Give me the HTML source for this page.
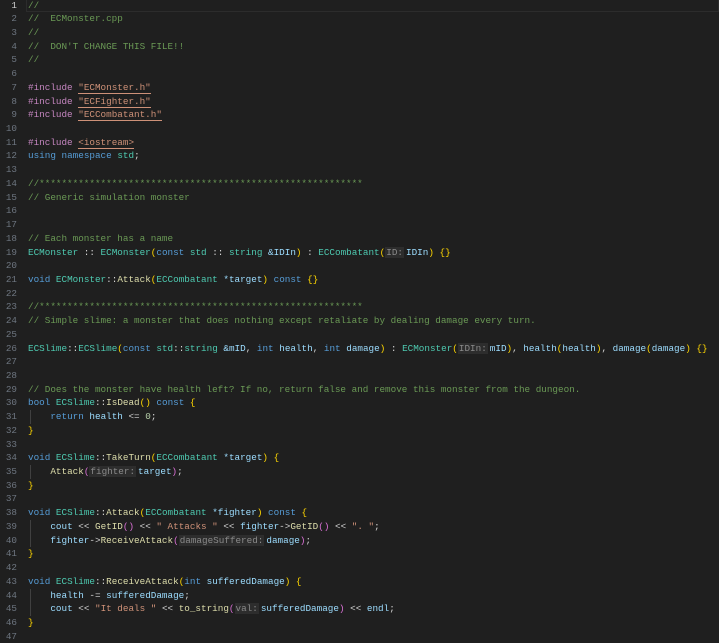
<!DOCTYPE html>
<html><head><meta charset="utf-8"><style>
html,body{margin:0;padding:0;background:#1f1f1f;width:719px;height:643px;overflow:hidden}
#ed{position:relative;font-family:"Liberation Mono",monospace;font-size:9.3px;color:#d4d4d4}
.l{position:absolute;left:0;height:13.72px;line-height:13.72px;white-space:pre;width:719px}
.n{position:absolute;left:0;width:17px;text-align:right;color:#6e7681}
.x{position:absolute;left:28px}
.cur{position:absolute;left:26px;right:0;border:1px solid #2c2c2c;box-sizing:border-box;height:13.72px}
.c{color:#6a9955}.k{color:#569cd6}.p{color:#c586c0}.s{color:#ce9178}.t{color:#4ec9b0}.f{color:#dcdcaa}.v{color:#9cdcfe}
.b1{color:#ffd700}.b2{color:#da70d6}.u{border-bottom:1px solid #ce9178}
.h{background:#2d2d2d;color:#8a8a8a;margin-right:2px;padding:0 1px}
.g{position:absolute;left:30px;width:1px;background:#404040}
</style></head><body><div id="ed">
<div class="l" style="top:-1.5px"><div class="cur"></div><span class="n" style="color:#ccc">1</span><span class="x c">//</span></div>
<div class="l" style="top:12.2px"><span class="n">2</span><span class="x c">//  ECMonster.cpp</span></div>
<div class="l" style="top:25.9px"><span class="n">3</span><span class="x c">//</span></div>
<div class="l" style="top:39.7px"><span class="n">4</span><span class="x c">//  DON'T CHANGE THIS FILE!!</span></div>
<div class="l" style="top:53.4px"><span class="n">5</span><span class="x c">//</span></div>
<div class="l" style="top:67.1px"><span class="n">6</span></div>
<div class="l" style="top:80.8px"><span class="n">7</span><span class="x"><span class="p">#include</span> <span class="s u">"ECMonster.h"</span></span></div>
<div class="l" style="top:94.5px"><span class="n">8</span><span class="x"><span class="p">#include</span> <span class="s u">"ECFighter.h"</span></span></div>
<div class="l" style="top:108.3px"><span class="n">9</span><span class="x"><span class="p">#include</span> <span class="s u">"ECCombatant.h"</span></span></div>
<div class="l" style="top:122px"><span class="n">10</span></div>
<div class="l" style="top:135.7px"><span class="n">11</span><span class="x"><span class="p">#include</span> <span class="s u">&lt;iostream&gt;</span></span></div>
<div class="l" style="top:149.4px"><span class="n">12</span><span class="x"><span class="k">using</span> <span class="k">namespace</span> <span class="t">std</span>;</span></div>
<div class="l" style="top:163.1px"><span class="n">13</span></div>
<div class="l" style="top:176.9px"><span class="n">14</span><span class="x c">//**********************************************************</span></div>
<div class="l" style="top:190.6px"><span class="n">15</span><span class="x c">// Generic simulation monster</span></div>
<div class="l" style="top:204.3px"><span class="n">16</span></div>
<div class="l" style="top:218px"><span class="n">17</span></div>
<div class="l" style="top:231.7px"><span class="n">18</span><span class="x c">// Each monster has a name</span></div>
<div class="l" style="top:245.5px"><span class="n">19</span><span class="x"><span class="t">ECMonster</span> :: <span class="t">ECMonster</span><span class="b1">(</span><span class="k">const</span> <span class="t">std</span> :: <span class="t">string</span> <span class="v">&amp;IDIn</span><span class="b1">)</span> : <span class="t">ECCombatant</span><span class="b1">(</span><span class="h">ID:</span><span class="v">IDIn</span><span class="b1">)</span> <span class="b1">{}</span></span></div>
<div class="l" style="top:259.2px"><span class="n">20</span></div>
<div class="l" style="top:272.9px"><span class="n">21</span><span class="x"><span class="k">void</span> <span class="t">ECMonster</span>::<span class="f">Attack</span><span class="b1">(</span><span class="t">ECCombatant</span> <span class="v">*target</span><span class="b1">)</span> <span class="k">const</span> <span class="b1">{}</span></span></div>
<div class="l" style="top:286.6px"><span class="n">22</span></div>
<div class="l" style="top:300.3px"><span class="n">23</span><span class="x c">//**********************************************************</span></div>
<div class="l" style="top:314.1px"><span class="n">24</span><span class="x c">// Simple slime: a monster that does nothing except retaliate by dealing damage every turn.</span></div>
<div class="l" style="top:327.8px"><span class="n">25</span></div>
<div class="l" style="top:341.5px"><span class="n">26</span><span class="x"><span class="t">ECSlime</span>::<span class="t">ECSlime</span><span class="b1">(</span><span class="k">const</span> <span class="t">std</span>::<span class="t">string</span> <span class="v">&amp;mID</span>, <span class="k">int</span> <span class="v">health</span>, <span class="k">int</span> <span class="v">damage</span><span class="b1">)</span> : <span class="t">ECMonster</span><span class="b1">(</span><span class="h">IDIn:</span><span class="v">mID</span><span class="b1">)</span>, <span class="v">health</span><span class="b1">(</span><span class="v">health</span><span class="b1">)</span>, <span class="v">damage</span><span class="b1">(</span><span class="v">damage</span><span class="b1">)</span> <span class="b1">{}</span></span></div>
<div class="l" style="top:355.2px"><span class="n">27</span></div>
<div class="l" style="top:368.9px"><span class="n">28</span></div>
<div class="l" style="top:382.7px"><span class="n">29</span><span class="x c">// Does the monster have health left? If no, return false and remove this monster from the dungeon.</span></div>
<div class="l" style="top:396.4px"><span class="n">30</span><span class="x"><span class="k">bool</span> <span class="t">ECSlime</span>::<span class="f">IsDead</span><span class="b1">()</span> <span class="k">const</span> <span class="b1">{</span></span></div>
<div class="l" style="top:410.1px"><span class="n">31</span><span class="x">    <span class="k">return</span> <span class="v">health</span> &lt;= <span style="color:#b5cea8">0</span>;</span></div>
<div class="l" style="top:423.8px"><span class="n">32</span><span class="x b1">}</span></div>
<div class="l" style="top:437.5px"><span class="n">33</span></div>
<div class="l" style="top:451.3px"><span class="n">34</span><span class="x"><span class="k">void</span> <span class="t">ECSlime</span>::<span class="f">TakeTurn</span><span class="b1">(</span><span class="t">ECCombatant</span> <span class="v">*target</span><span class="b1">)</span> <span class="b1">{</span></span></div>
<div class="l" style="top:465px"><span class="n">35</span><span class="x">    <span class="f">Attack</span><span class="b2">(</span><span class="h">fighter:</span><span class="v">target</span><span class="b2">)</span>;</span></div>
<div class="l" style="top:478.7px"><span class="n">36</span><span class="x b1">}</span></div>
<div class="l" style="top:492.4px"><span class="n">37</span></div>
<div class="l" style="top:506.1px"><span class="n">38</span><span class="x"><span class="k">void</span> <span class="t">ECSlime</span>::<span class="f">Attack</span><span class="b1">(</span><span class="t">ECCombatant</span> <span class="v">*fighter</span><span class="b1">)</span> <span class="k">const</span> <span class="b1">{</span></span></div>
<div class="l" style="top:519.9px"><span class="n">39</span><span class="x">    <span class="v">cout</span> &lt;&lt; <span class="f">GetID</span><span class="b2">()</span> &lt;&lt; <span class="s">" Attacks "</span> &lt;&lt; <span class="v">fighter</span>-&gt;<span class="f">GetID</span><span class="b2">()</span> &lt;&lt; <span class="s">". "</span>;</span></div>
<div class="l" style="top:533.6px"><span class="n">40</span><span class="x">    <span class="v">fighter</span>-&gt;<span class="f">ReceiveAttack</span><span class="b2">(</span><span class="h">damageSuffered:</span><span class="v">damage</span><span class="b2">)</span>;</span></div>
<div class="l" style="top:547.3px"><span class="n">41</span><span class="x b1">}</span></div>
<div class="l" style="top:561px"><span class="n">42</span></div>
<div class="l" style="top:574.7px"><span class="n">43</span><span class="x"><span class="k">void</span> <span class="t">ECSlime</span>::<span class="f">ReceiveAttack</span><span class="b1">(</span><span class="k">int</span> <span class="v">sufferedDamage</span><span class="b1">)</span> <span class="b1">{</span></span></div>
<div class="l" style="top:588.5px"><span class="n">44</span><span class="x">    <span class="v">health</span> -= <span class="v">sufferedDamage</span>;</span></div>
<div class="l" style="top:602.2px"><span class="n">45</span><span class="x">    <span class="v">cout</span> &lt;&lt; <span class="s">"It deals "</span> &lt;&lt; <span class="f">to_string</span><span class="b2">(</span><span class="h">val:</span><span class="v">sufferedDamage</span><span class="b2">)</span> &lt;&lt; <span class="v">endl</span>;</span></div>
<div class="l" style="top:615.9px"><span class="n">46</span><span class="x b1">}</span></div>
<div class="l" style="top:629.6px"><span class="n">47</span></div>
<div class="g" style="top:410px;height:13.7px"></div>
<div class="g" style="top:465px;height:13.7px"></div>
<div class="g" style="top:520px;height:27.4px"></div>
<div class="g" style="top:588.5px;height:27.4px"></div>
</div></body></html>
